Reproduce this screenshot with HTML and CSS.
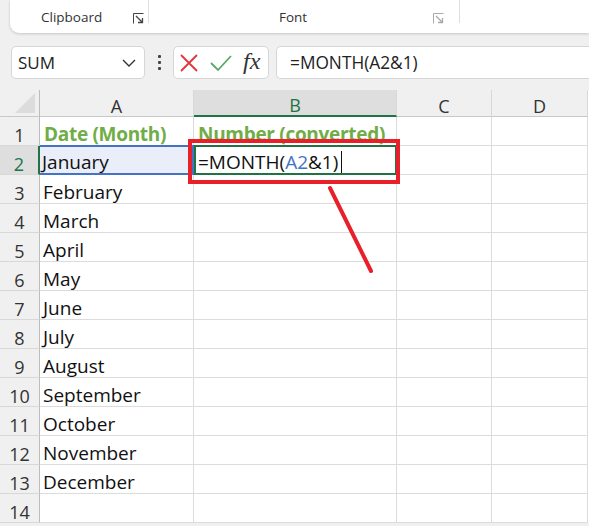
FILE: index.html
```html
<!DOCTYPE html>
<html>
<head>
<meta charset="utf-8">
<link rel="stylesheet" href="styles.css">
</head>
<body>
<div class="ribbon">
  <div class="group g-clip">
    <span class="glabel">Clipboard</span>
    <svg class="launch" width="11" height="11" viewBox="0 0 11 11"><path d="M0.5 10.5V0.5H10.5" fill="none" stroke="#444" stroke-width="1"/><path d="M3 3L9.5 9.5M5 9.5H9.5V5" fill="none" stroke="#444" stroke-width="1.3"/></svg>
  </div>
  <div class="group g-font">
    <span class="glabel">Font</span>
    <svg class="launch" width="11" height="11" viewBox="0 0 11 11"><path d="M0.5 10.5V0.5H10.5" fill="none" stroke="#aaa" stroke-width="1"/><path d="M3 3L9.5 9.5M5 9.5H9.5V5" fill="none" stroke="#aaa" stroke-width="1.3"/></svg>
  </div>
  <div class="group g-rest"></div>
</div>

<div class="fbar">
  <div class="namebox">
    <span>SUM</span>
    <svg width="14" height="8" viewBox="0 0 14 8"><path d="M1 1L7 7L13 1" fill="none" stroke="#333" stroke-width="1.4"/></svg>
  </div>
  <div class="kebab"><i></i><i></i><i></i></div>
  <div class="fbtns">
    <svg width="18" height="18" viewBox="0 0 18 18"><path d="M1 1L17 17M17 1L1 17" stroke="#e3343a" stroke-width="1.8"/></svg>
    <svg width="22" height="18" viewBox="0 0 22 18"><path d="M1 9L8 16L21 2" fill="none" stroke="#5aa865" stroke-width="1.8"/></svg>
    <span class="fx">fx</span>
  </div>
  <div class="finput">=MONTH(A2&amp;1)</div>
</div>

<div class="sheet">
  <div class="grid">
    <div class="corner"><svg width="20" height="20" viewBox="0 0 20 20"><path d="M20 0V20H0Z" fill="#dcdcdc"/></svg></div>
    <div class="ch">A</div>
    <div class="ch sel">B</div>
    <div class="ch">C</div>
    <div class="ch">D</div>

    <div class="rh">1</div><div class="c hd">Date (Month)</div><div class="c hd">Number (converted)</div><div class="c"></div><div class="c"></div>
    <div class="rh rsel">2</div><div class="c a2">January</div><div class="c b2">=MONTH(<span class="ref">A2</span>&amp;1)<span class="caret"></span></div><div class="c"></div><div class="c"></div>
    <div class="rh">3</div><div class="c">February</div><div class="c"></div><div class="c"></div><div class="c"></div>
    <div class="rh">4</div><div class="c">March</div><div class="c"></div><div class="c"></div><div class="c"></div>
    <div class="rh">5</div><div class="c">April</div><div class="c"></div><div class="c"></div><div class="c"></div>
    <div class="rh">6</div><div class="c">May</div><div class="c"></div><div class="c"></div><div class="c"></div>
    <div class="rh">7</div><div class="c">June</div><div class="c"></div><div class="c"></div><div class="c"></div>
    <div class="rh">8</div><div class="c">July</div><div class="c"></div><div class="c"></div><div class="c"></div>
    <div class="rh">9</div><div class="c">August</div><div class="c"></div><div class="c"></div><div class="c"></div>
    <div class="rh">10</div><div class="c">September</div><div class="c"></div><div class="c"></div><div class="c"></div>
    <div class="rh">11</div><div class="c">October</div><div class="c"></div><div class="c"></div><div class="c"></div>
    <div class="rh">12</div><div class="c">November</div><div class="c"></div><div class="c"></div><div class="c"></div>
    <div class="rh">13</div><div class="c">December</div><div class="c"></div><div class="c"></div><div class="c"></div>
    <div class="rh">14</div><div class="c"></div><div class="c"></div><div class="c"></div><div class="c"></div>
  </div>
  <div class="redbox"></div>
  <svg class="arrow" width="60" height="100" viewBox="0 0 60 100"><path d="M10 10L51 93" stroke="#e8202a" stroke-width="4" stroke-linecap="round"/></svg>
</div>
</body>
</html>
```
FILE: styles.css
```css
* { box-sizing: border-box; }
html, body { margin: 0; padding: 0; }
body {
  width: 589px; height: 526px; overflow: hidden;
  background: #f0f0f0;
  font-family: "Open Sans", "Noto Sans", sans-serif;
  position: relative;
}
.ribbon {
  margin-left: 10px;
  height: 33px;
  background: #fff;
  border-bottom-left-radius: 9px;
  box-shadow: 0 1px 3px rgba(0,0,0,0.18);
  display: flex;
}
.group {
  height: 23px;
  display: flex;
  align-items: center;
  position: relative;
  border-right: 1px solid #dedede;
}
.glabel { font-size: 13.5px; color: #333; margin-top: 10px; }
.g-clip { width: 139px; padding-left: 31px; }
.g-clip .launch { position: absolute; left: 123px; top: 13px; }
.g-font { width: 311px; padding-left: 130px; }
.g-font .launch { position: absolute; left: 284px; top: 13px; }
.g-rest { flex: 1; border-right: none; }

.fbar {
  margin-top: 13px;
  height: 33px;
  display: flex;
  align-items: stretch;
}
.namebox {
  margin-left: 11px;
  width: 134px;
  background: #fff;
  border: 1px solid #d6d6d6;
  border-radius: 5px;
  display: flex;
  align-items: center;
  justify-content: space-between;
  padding: 0 8px 0 6px;
  font-size: 17px;
  color: #222;
}
.kebab {
  width: 28px;
  display: flex;
  flex-direction: column;
  align-items: center;
  justify-content: center;
  gap: 3px;
}
.kebab i { width: 3px; height: 3px; background: #444; display: block; border-radius: 1px; }
.fbtns {
  width: 96px;
  background: #fff;
  border: 1px solid #d6d6d6;
  border-radius: 5px;
  display: flex;
  align-items: center;
  padding-left: 6px;
  gap: 12px;
}
.fx {
  font-family: "Liberation Serif", "DejaVu Serif", serif;
  font-style: italic;
  font-size: 24px;
  color: #333;
  margin-left: -1px;
  line-height: 1;
  margin-top: -3px;
}
.finput {
  margin-left: 7px;
  flex: 1;
  background: #fff;
  border: 1px solid #d6d6d6;
  border-right: none;
  border-radius: 5px 0 0 5px;
  display: flex;
  align-items: center;
  padding-left: 13px;
  font-size: 17.3px;
  color: #222;
}

.sheet {
  margin-top: 11px;
  position: relative;
}
.grid {
  display: grid;
  grid-template-columns: 40px 154px 203px 95px 96px;
  grid-template-rows: 27px repeat(14, 29px);
  background: #fff;
}
.corner {
  background: #f0f0f0;
  border-right: 1px solid #bdbdbd;
  border-bottom: 1px solid #c8c8c8;
  display: flex; align-items: flex-end; justify-content: flex-end;
  padding: 0 4px 3px 0;
}
.ch {
  background: #f0f0f0;
  border-right: 1px solid #d8d8d8;
  border-bottom: 1px solid #c8c8c8;
  display: flex; align-items: center; justify-content: center;
  font-size: 18px; color: #333;
  padding-top: 5px;
}
.ch.sel { background: #dedede; color: #217346; border-bottom: 2px solid #217346; }
.rh {
  background: #f0f0f0;
  border-right: 1px solid #bdbdbd;
  border-bottom: 1px solid #d8d8d8;
  display: flex; align-items: center; justify-content: center;
  font-size: 18px; color: #333;
  padding-top: 7px;
}
.rh.rsel { background: #dedede; color: #217346; border-right: 2px solid #217346; }
.c {
  border-right: 1px solid #dcdcdc;
  border-bottom: 1px solid #dcdcdc;
  font-size: 19px;
  color: #111;
  padding-left: 3px;
  display: flex; align-items: flex-end;
  padding-bottom: 0;
  white-space: nowrap;
  line-height: 22px;
}
.c.hd { color: #70ad47; font-weight: 700; padding-left: 4px; letter-spacing: -0.3px; }
.c.a2 {
  background: #e9eef8;
  border-top: 2px solid #4472c4;
  border-bottom: 2px solid #4472c4;
  border-right: 2px solid #4472c4;
  margin-top: -1px;
  padding-left: 2px;
  padding-bottom: 0;
}
.c.b2 {
  border: 2px solid #217346;
  margin-top: -1px;
  padding-left: 2px;
}
.ref { color: #4472c4; }
.caret { display: inline-block; width: 1px; height: 22px; background: #111; margin-left: 3px; align-self: flex-end; }

.redbox {
  position: absolute;
  left: 188px; top: 49px;
  width: 212px; height: 45px;
  border: 4px solid #e8202a;
}
.arrow { position: absolute; left: 320px; top: 88px; }
```
